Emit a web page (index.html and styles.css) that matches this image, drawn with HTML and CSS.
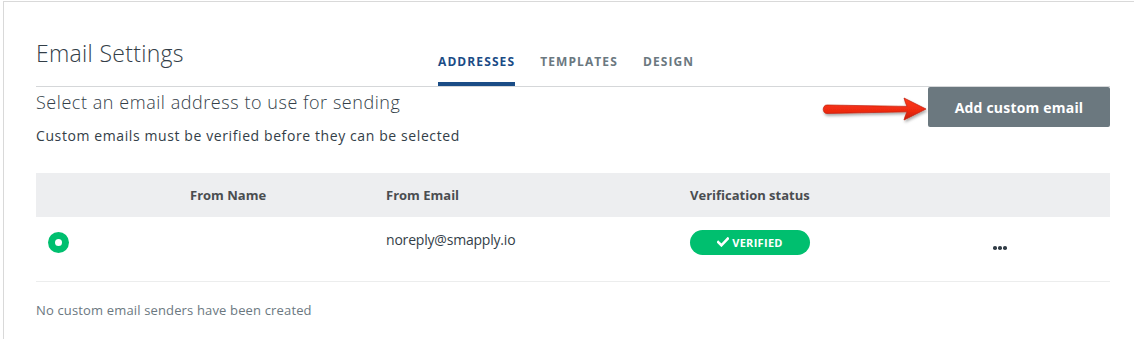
FILE: index.html
```html
<!DOCTYPE html>
<html>
<head>
<meta charset="utf-8">
<link rel="stylesheet" href="styles.css">
</head>
<body>
<div class="card">
  <div class="header">
    <h1 class="title">Email Settings</h1>
    <nav class="tabs">
      <span class="tab active">Addresses</span>
      <span class="tab">Templates</span>
      <span class="tab">Design</span>
    </nav>
  </div>
  <div class="intro">
    <div class="intro-text">
      <p class="subtitle">Select an email address to use for sending</p>
      <p class="note">Custom emails must be verified before they can be selected</p>
    </div>
    <button class="add-btn">Add custom email</button>
  </div>
  <div class="table">
    <div class="thead">
      <div class="cell"></div>
      <div class="cell">From Name</div>
      <div class="cell">From Email</div>
      <div class="cell">Verification status</div>
      <div class="cell"></div>
    </div>
    <div class="trow">
      <div class="cell radio-cell"><span class="radio"></span></div>
      <div class="cell"></div>
      <div class="cell email">noreply@smapply.io</div>
      <div class="cell"><span class="badge"><svg class="check" viewBox="0 0 12 10" width="12" height="10"><path d="M1.2 5.2 L4.4 8.3 L10.8 1.6" fill="none" stroke="#fff" stroke-width="2.6" stroke-linecap="square"/></svg>VERIFIED</span></div>
      <div class="cell"><span class="dots"><i></i><i></i><i></i></span></div>
    </div>
  </div>
  <p class="empty">No custom email senders have been created</p>
  <svg class="arrow" width="118" height="34" viewBox="0 0 118 34">
    <defs>
      <filter id="sh" x="-10%" y="-30%" width="130%" height="180%">
        <feDropShadow dx="1" dy="2" stdDeviation="1.4" flood-color="#000" flood-opacity="0.35"/>
      </filter>
      <linearGradient id="rg" x1="0" y1="0" x2="0" y2="1">
        <stop offset="0" stop-color="#ff3a1c"/>
        <stop offset="0.6" stop-color="#ee2a10"/>
        <stop offset="1" stop-color="#c81e0a"/>
      </linearGradient>
    </defs>
    <path filter="url(#sh)" d="M8 11 C3 11 3 19.5 8 19.5 L88 17.8 Q86 22 85 26 L107 15 L85 4 Q86 8 88 12.4 Z" fill="url(#rg)" stroke="#c01d0a" stroke-width="0.7" stroke-linejoin="round"/>
  </svg>
</div>
</body>
</html>
```
FILE: styles.css
```css
* { box-sizing: border-box; }
html, body { margin: 0; padding: 0; background: #fff; }
body {
  padding: 1px 0 0 3px;
  font-family: "Open Sans", "Liberation Sans", sans-serif;
  color: #333e48;
}
.card {
  position: relative;
  border-left: 1px solid #d9d9d9;
  border-top: 1px solid #d9d9d9;
  padding: 0 24px 30px 32px;
  height: 338px;
}
.header {
  display: flex;
  align-items: flex-end;
  border-bottom: 1px solid #d5d7d9;
  height: 85px;
}
.title {
  margin: 0 0 19px 0;
  width: 402px;
  font-size: 23px;
  font-weight: 300;
  line-height: 28px;
  color: #333e48;
  letter-spacing: 0.3px;
}
.tabs { display: flex; gap: 25px; }
.tab {
  font-size: 12px;
  font-weight: 700;
  text-transform: uppercase;
  letter-spacing: 1.1px;
  color: #6b787f;
  line-height: 16px;
  padding: 0 0 12px 0;
  border-bottom: 4px solid transparent;
}
.tab.active { color: #1a4c86; border-bottom-color: #1a4c86; }
.intro {
  display: flex;
  justify-content: space-between;
  align-items: flex-start;
}
.subtitle {
  margin: 0;
  font-size: 18px;
  font-weight: 300;
  line-height: 30px;
  color: #333e48;
  letter-spacing: 0.55px;
}
.note {
  margin: 9px 0 0 0;
  font-size: 14px;
  line-height: 20px;
  color: #333e48;
  letter-spacing: 0.6px;
}
.add-btn {
  width: 182px;
  height: 40px;
  border: 0;
  border-radius: 2px;
  background: #6b787f;
  color: #fff;
  font-family: inherit;
  font-size: 14px;
  font-weight: 700;
  letter-spacing: 0.2px;
  padding: 0;
}
.table { margin-top: 27px; }
.thead, .trow {
  display: grid;
  grid-template-columns: 154px 196px 304px 300px 1fr;
}
.thead {
  background: #edeef0;
  height: 44px;
  align-items: center;
  font-size: 13px;
  font-weight: 700;
  color: #4a4d50;
}
.trow {
  height: 65px;
  align-items: start;
  padding-top: 13px;
  border-bottom: 1px solid #eceded;
  font-size: 14px;
  line-height: 20px;
}
.trow .cell { display: flex; }
.radio-cell { padding-left: 12px; }
.radio {
  width: 21px;
  height: 21px;
  border-radius: 50%;
  background: #00bf6f;
  display: flex;
  align-items: center;
  justify-content: center;
  margin-top: 2px;
}
.radio::after {
  content: "";
  width: 7px;
  height: 7px;
  border-radius: 50%;
  background: #fff;
}
.email { color: #333e48; letter-spacing: -0.2px; }
.badge {
  display: inline-flex;
  align-items: center;
  justify-content: center;
  gap: 3px;
  width: 120px;
  height: 25px;
  border-radius: 13px;
  background: #00bf6f;
  color: #fff;
  font-size: 11px;
  font-weight: 700;
  letter-spacing: 0.3px;
}
.check { margin-top: -2px; }
.dots {
  display: flex;
  gap: 1.5px;
  margin-left: 3px;
  margin-top: 16px;
}
.dots i {
  display: block;
  width: 3.6px;
  height: 3.6px;
  border-radius: 50%;
  background: #333e48;
}
.empty {
  margin: 19px 0 0 0;
  font-size: 13px;
  line-height: 18px;
  color: #6b787f;
  letter-spacing: 0.15px;
}
.arrow {
  position: absolute;
  left: 815px;
  top: 92px;
}
```
